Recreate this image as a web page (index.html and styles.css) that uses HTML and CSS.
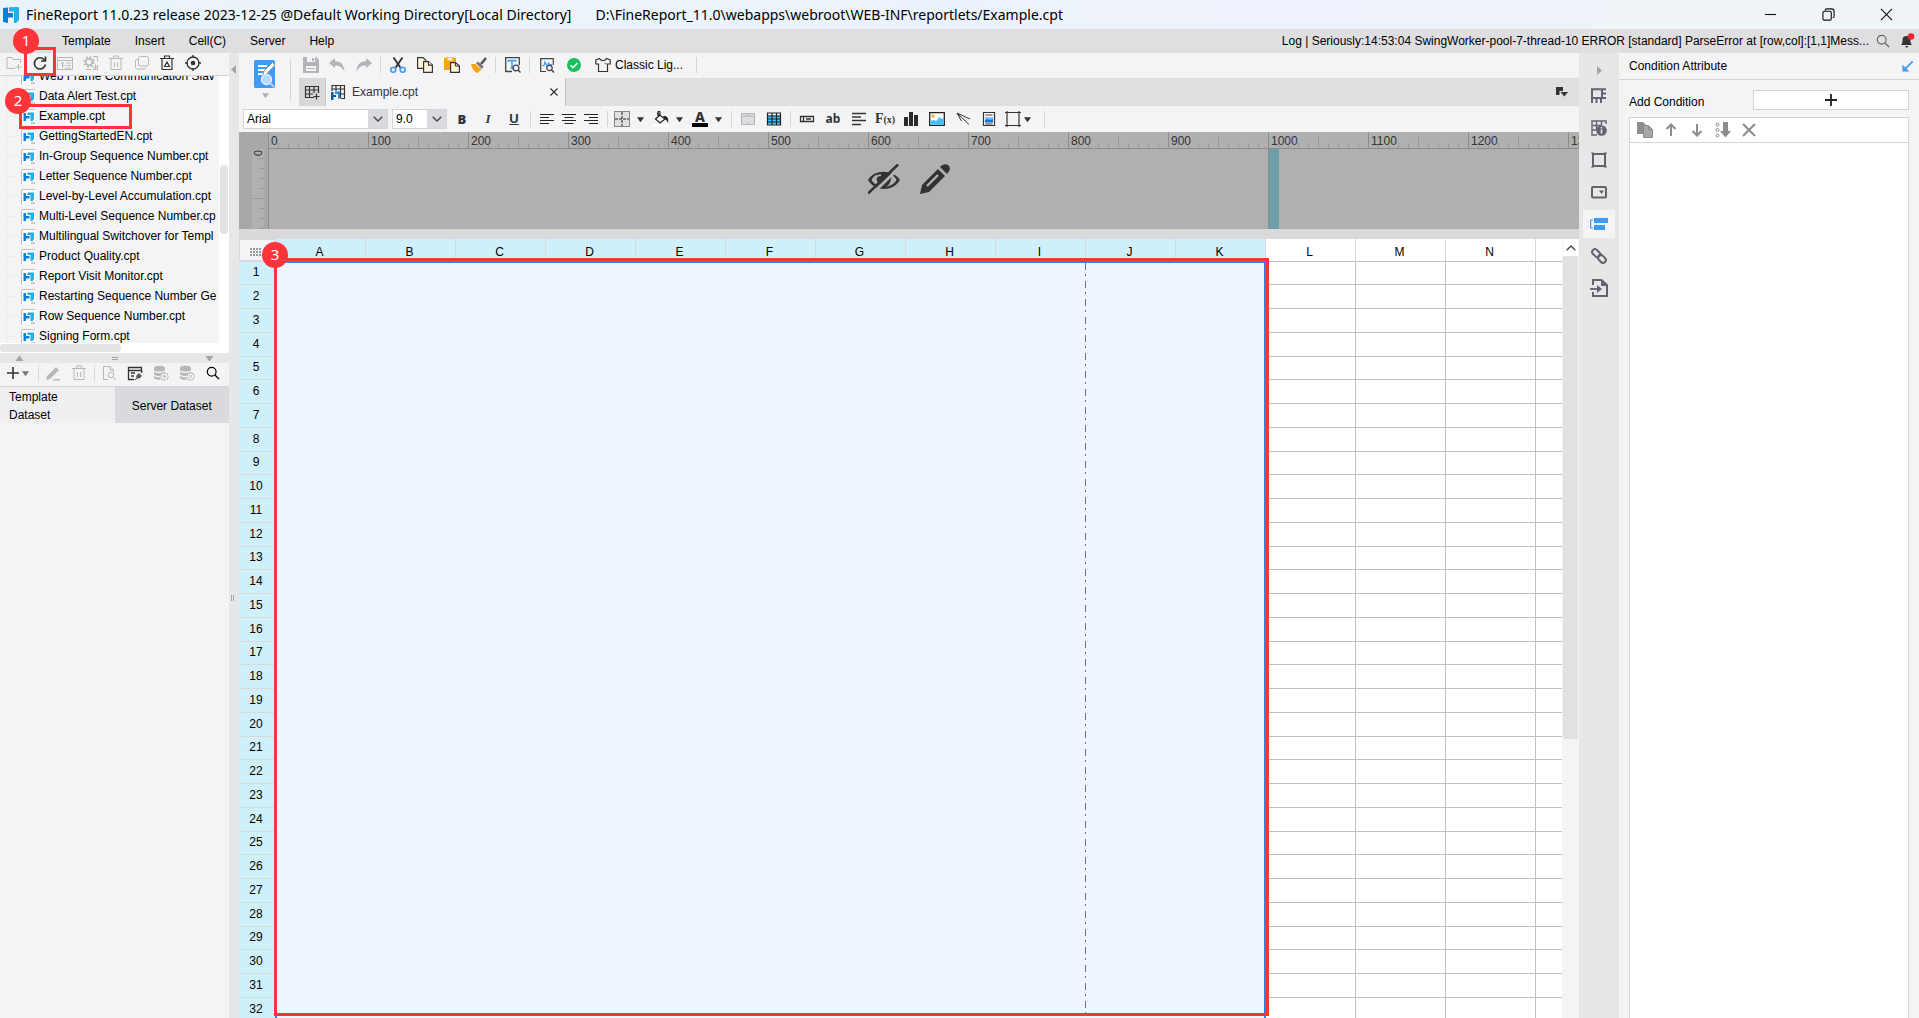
FILE: index.html
```html
<!DOCTYPE html>
<html lang="en">
<head>
    <meta charset="UTF-8">
    <meta name="viewport" content="width=device-width, initial-scale=1.0">
    <title>FineReport 11.0.23</title>
    <link rel="stylesheet" href="styles.css">
</head>
<body>
    <svg class="defs" aria-hidden="true">
        <symbol id="logo" viewBox="0 0 16 16">
            <path d="M0 1l5-.5V6h5v4.500H5V16l-5-1z" fill="#0a7fd4"/>
            <path d="M6 .300L14.500 0c1 0 1.500.5 1.500 1.500V13l-3 3h-2V4.500H6z" fill="#23b0e8"/>
        </symbol>
        <symbol id="cpt" viewBox="0 0 14 15">
            <path d="M0 0h14v15H0z" fill="#fff"/>
            <path d="M.5 15V.5H14" fill="none" stroke="#c4c4c4"/>
            <path d="M10 13h4v2h-4z" fill="#c8c8c8"/>
            <path d="M2.500 4H5v3h3.500v2.500H5V12H2.500z" fill="#0a7fdc"/>
            <path d="M6.500 3.500H13v6.500l-1.500 2H9.500V6h-3z" fill="#23b0e8"/>
        </symbol>
        <symbol id="caret" viewBox="0 0 8 5"><path d="M0 0h8L4.500 5h-1z"/></symbol>
        <symbol id="chevron" viewBox="0 0 10 6"><path d="M.7.700L5 5 9.300.700" fill="none" stroke="#444" stroke-width="1.300"/></symbol>
        <symbol id="trash" viewBox="0 0 16 16"><path d="M1 3.500h14M5.500 3V1h5v2M3 4v10.500h10V4M6.500 7v5M9.500 7v5" fill="none" stroke="currentColor"/></symbol>
        <symbol id="db" viewBox="0 0 16 16">
            <path d="M1 3c0-3 11-3 11 0v2c0 2-11 2-11 0zM1 6.500c2 2 9 2 11 0V8c-3 0-5 1.500-5 3-3 0-6-.5-6-2zM1 11c1.500 1 4 1.500 6 1.200 0 1 .5 2 1 2.500-3 .3-7-.2-7-1.700z" fill="currentColor"/>
            <circle cx="11.500" cy="11.500" r="3.700" fill="none" stroke="currentColor"/>
        </symbol>
        <symbol id="search" viewBox="0 0 16 16"><circle cx="6.500" cy="6.500" r="5" fill="none" stroke="currentColor" stroke-width="1.300"/><path d="M10.200 10.200L15 15" stroke="currentColor" stroke-width="1.600"/></symbol>
    </svg>

    <header class="title-bar">
        <svg class="app-logo"><use href="#logo"/></svg>
        <span class="app-title">FineReport 11.0.23 release 2023-12-25 @Default Working Directory[Local Directory]</span>
        <span class="app-path">D:\FineReport_11.0\webapps\webroot\WEB-INF\reportlets/Example.cpt</span>
        <div class="window-buttons">
            <button aria-label="Minimize"><svg viewBox="0 0 14 14"><path d="M1 7h12" stroke="#111" stroke-width="1.200"/></svg></button>
            <button aria-label="Restore"><svg viewBox="0 0 14 14"><g fill="none" stroke="#111" stroke-width="1.200"><rect x="1" y="3.500" width="9" height="9.500" rx="1.500"/><path d="M3.500 3V2.500C3.500 1.500 4 1 5 1h5.500C12 1 13 2 13 3.500V9c0 1-.5 1.500-1.500 1.500"/></g></svg></button>
            <button aria-label="Close"><svg viewBox="0 0 14 14"><path d="M1 1l12 12M13 1L1 13" stroke="#111" stroke-width="1.200"/></svg></button>
        </div>
    </header>

    <nav class="menu-bar">
        <div class="menus">
            <button>Template</button>
            <button>Insert</button>
            <button>Cell(C)</button>
            <button>Server</button>
            <button>Help</button>
        </div>
        <span class="log">Log | Seriously:14:53:04 SwingWorker-pool-7-thread-10 ERROR [standard] ParseError at [row,col]:[1,1]Mess...</span>
        <button class="menu-icon" aria-label="Search"><svg class="icon small grey"><use href="#search"/></svg></button>
        <button class="menu-icon" aria-label="Notifications"><svg class="icon" viewBox="0 0 16 16"><path d="M2 12c1.500-1.500 1.500-3 1.500-5 0-2.500 1.500-4 4-4s4 1.500 4 4c0 2 0 3.500 1.500 5zM6 13h3.500l-1.700 2z" fill="#333"/><circle cx="12" cy="3.500" r="3.300" fill="#f5222d"/></svg></button>
    </nav>

    <main class="workspace">
        <aside class="left-panel">
            <div class="tree-tools">
                <button aria-label="New folder"><svg class="icon off" viewBox="0 0 16 16"><path d="M9 13.500H1v-11h5l1 2h7.500V8M9.500 12H16M12.500 9v6" fill="none" stroke="currentColor"/></svg></button>
                <button aria-label="Refresh"><svg class="icon" viewBox="0 0 16 16"><path d="M12.500 5A5.600 5.600 0 1 0 13.500 9.500M13.500 1.500v4.500H9" fill="none" stroke="#333" stroke-width="1.700"/></svg></button>
                <button aria-label="Locate folder"><svg class="icon off" viewBox="0 0 16 16"><path d="M.5 2.500h15v12H.5zM.5 5.500h15M4 8h3M5.500 8v5M5.500 10.500H8M9 8h5M9 10.500h5M8 13h6" fill="none" stroke="currentColor"/></svg></button>
                <button aria-label="Settings"><svg class="icon off" viewBox="0 0 16 16"><path d="M10 1.500h4.500v5M14.500 10v4.500H10M8 14.500H3" fill="none" stroke="currentColor"/><circle cx="6" cy="7" r="3.200" fill="none" stroke="currentColor" stroke-width="1.500"/><circle cx="6" cy="7" r="4.800" fill="none" stroke="currentColor" stroke-width="1.800" stroke-dasharray="1.900 1.870"/><path d="M10 12h5M12.500 9.500v5" stroke="currentColor"/></svg></button>
                <button aria-label="Delete"><svg class="icon off"><use href="#trash"/></svg></button>
                <button aria-label="Copy"><svg class="icon off" viewBox="0 0 16 16"><g fill="none" stroke="currentColor"><rect x="4.500" y="1.500" width="10" height="9.500" rx="2"/><path d="M4 4.500H3c-1 0-1.500.5-1.500 1.500v6c0 1.500.5 2 2 2H10c1 0 1.500-.5 1.500-1.500"/></g></svg></button>
                <button aria-label="Recycle bin"><svg class="icon" viewBox="0 0 16 16"><path d="M1 3.500h14M5.500 3V1h5v2M3 4v10.500h10V4M5.500 11.500L8 7l2.500 4.500z" fill="none" stroke="#333" stroke-width="1.200"/></svg></button>
                <button aria-label="Locate"><svg class="icon" viewBox="0 0 16 16"><circle cx="8" cy="8" r="6" fill="none" stroke="#333" stroke-width="1.300"/><circle cx="8" cy="8" r="2.300" fill="#333"/><path d="M8 0v3M8 13v3M0 8h3M13 8h3" stroke="#333" stroke-width="1.300"/></svg></button>
            </div>

            <div class="tree-box">
                <ul class="tree">
                    <li><svg><use href="#cpt"/></svg>Web Frame Communication Slav</li>
                    <li><svg><use href="#cpt"/></svg>Data Alert Test.cpt</li>
                    <li><svg><use href="#cpt"/></svg>Example.cpt</li>
                    <li><svg><use href="#cpt"/></svg>GettingStartedEN.cpt</li>
                    <li><svg><use href="#cpt"/></svg>In-Group Sequence Number.cpt</li>
                    <li><svg><use href="#cpt"/></svg>Letter Sequence Number.cpt</li>
                    <li><svg><use href="#cpt"/></svg>Level-by-Level Accumulation.cpt</li>
                    <li><svg><use href="#cpt"/></svg>Multi-Level Sequence Number.cp</li>
                    <li><svg><use href="#cpt"/></svg>Multilingual Switchover for Templ</li>
                    <li><svg><use href="#cpt"/></svg>Product Quality.cpt</li>
                    <li><svg><use href="#cpt"/></svg>Report Visit Monitor.cpt</li>
                    <li><svg><use href="#cpt"/></svg>Restarting Sequence Number Ge</li>
                    <li><svg><use href="#cpt"/></svg>Row Sequence Number.cpt</li>
                    <li><svg><use href="#cpt"/></svg>Signing Form.cpt</li>
                </ul>
                <div class="tree-scroll-y"><div class="thumb"></div></div>
            </div>
            <div class="tree-scroll-x"><div class="thumb"></div></div>

            <div class="h-splitter">
                <svg class="caret up"><use href="#caret"/></svg>
                <span class="grip"></span>
                <svg class="caret"><use href="#caret"/></svg>
            </div>

            <div class="dataset-tools">
                <button class="add-dataset" aria-label="Add dataset"><svg class="icon" viewBox="0 0 16 16"><path d="M8 2v12M2 8h12" stroke="#333" stroke-width="1.600"/></svg><svg class="caret"><use href="#caret"/></svg></button>
                <span class="sep"></span>
                <button aria-label="Edit"><svg class="icon off" viewBox="0 0 16 16"><path d="M2 11L11 2l3 3-9 9-4 1zM9 14h6v1.500H7.500z" fill="currentColor"/></svg></button>
                <button aria-label="Delete dataset"><svg class="icon off"><use href="#trash"/></svg></button>
                <span class="sep"></span>
                <button aria-label="Preview"><svg class="icon off" viewBox="0 0 16 16"><path d="M7 14.500H2.500v-13H9l3.500 3.500v2M9 1.500V5h3.500" fill="none" stroke="currentColor"/><circle cx="10" cy="10" r="2.800" fill="none" stroke="currentColor"/><path d="M12 12l3 3" stroke="currentColor"/></svg></button>
                <button aria-label="Connection"><svg class="icon" viewBox="0 0 16 16"><path d="M7 14.500H1.500v-12h13V7M1.500 5.500h13M4 8h4M4 11h3" fill="none" stroke="#333" stroke-width="1.300"/><path d="M8 15l2-2M14 8l1.500-1.500" stroke="#333"/><path d="M9 11l3-3 3 3-2.500 2.500H10z" fill="#555"/></svg></button>
                <button aria-label="Run"><svg class="icon off" viewBox="0 0 16 16"><use href="#db"/><path d="M10.500 9.500v4l3-2z" fill="currentColor"/></svg></button>
                <button aria-label="Stop"><svg class="icon off" viewBox="0 0 16 16"><use href="#db"/><path d="M10 10l3 3M13 10l-3 3" stroke="currentColor"/></svg></button>
                <button aria-label="Find dataset"><svg class="icon small"><use href="#search"/></svg></button>
            </div>

            <div class="dataset-tabs">
                <button class="dataset-tab active">Template<br>Dataset</button>
                <button class="dataset-tab server">Server Dataset</button>
            </div>
        </aside>

        <div class="v-splitter">
            <svg class="v-arrow" viewBox="0 0 5 9"><path d="M5 0v9L0 4.500z"/></svg>
            <span class="v-grip"></span>
        </div>

        <section class="designer">
            <div class="top-tools">
                <button class="preview-button" aria-label="Preview template">
                    <svg class="preview-icon" viewBox="0 0 22 28"><rect y="0" width="21" height="28" rx="1.500" fill="#3f9bf8"/><path d="M4 6h9M4 10h7M4 14h5" stroke="#fff" stroke-width="1.800"/><path d="M9 15l1-4 8.500-8.500 2.500 2.500L12.500 14z" fill="#fff" stroke="#8a97a5"/><circle cx="12.500" cy="19.500" r="5" fill="#b5dbfb" stroke="#e8eef4" stroke-width="1.300"/><path d="M16.500 23.500l3.500 3.500" stroke="#c4cbd2" stroke-width="2"/></svg>
                    <svg class="caret"><use href="#caret"/></svg>
                </button>
                <div class="top-right">
                    <div class="main-tools">
                        <button aria-label="Save"><svg class="icon off" viewBox="0 0 16 16"><path d="M0 0h13l3 3v13H0z" fill="#b4b4b8"/><path d="M4 0h8v5H4zM3 9h10v5H3z" fill="#f4f4f7"/><path d="M9 1h2v3H9zM4 11h8v1H4z" fill="#b4b4b8"/></svg></button>
                        <button aria-label="Undo"><svg class="icon off" viewBox="0 0 16 16"><path d="M0 6l6-5v3.200c5.500 0 9 3 9.500 10.300C13 10.500 11 8.500 6 8.500V11z" fill="#b4b4b8"/></svg></button>
                        <button aria-label="Redo"><svg class="icon off" viewBox="0 0 16 16"><path d="M16 6l-6-5v3.200C4.500 4.200 1 7.200.500 14.500 3 10.500 5 8.500 10 8.500V11z" fill="#b4b4b8"/></svg></button>
                        <span class="sep"></span>
                        <button aria-label="Cut"><svg class="icon" viewBox="0 0 16 16"><path d="M3.500.500l7.500 11M12.500.500L5 11.500" stroke="#333" stroke-width="1.900"/><circle cx="3.300" cy="12.700" r="2.500" fill="none" stroke="#3f9bf8" stroke-width="1.600"/><circle cx="12.700" cy="12.700" r="2.500" fill="none" stroke="#3f9bf8" stroke-width="1.600"/></svg></button>
                        <button aria-label="Copy cell"><svg class="icon" viewBox="0 0 16 16"><g fill="#fff6dd" stroke="#333" stroke-width="1.200"><path d="M.6.600H6L9 3.500v7.900H.600z"/><path d="M6.600 4.600h5l3.800 3.500v7.300H6.600z"/><path d="M11.500 4.600v3.500h4"/></g></svg></button>
                        <button aria-label="Paste"><svg class="icon" viewBox="0 0 16 16"><path d="M0 1h12v12H0z" fill="#f2a50f"/><path d="M3 0h6v4H3z" fill="#fff1cf" stroke="#f2a50f"/><path d="M6.600 5.600h5l3.800 3.500v6.300H6.600z" fill="#fff6dd" stroke="#333" stroke-width="1.200"/><path d="M11.500 5.600v3.500h4" fill="none" stroke="#333"/></svg></button>
                        <button aria-label="Format painter"><svg class="icon" viewBox="0 0 16 16"><path d="M15 1l-5 6" stroke="#555" stroke-width="2.600"/><path d="M7 4.500l5.500 5L11 12 5 6.200z" fill="#777"/><path d="M0 7l4.500 0 6 5.500-4 3.500C4 15.500 1 12 0 7z" fill="#f2a50f"/></svg></button>
                        <span class="sep"></span>
                        <button aria-label="Find text"><svg class="icon" viewBox="0 0 16 16"><path d="M7 14.500H.700V.700h13.600V8" fill="none" stroke="#444" stroke-width="1.300"/><path d="M3.500 5V3.500h7V5M7 3.500V11M5.500 11h3" fill="none" stroke="#3f9bf8" stroke-width="1.500"/><circle cx="11" cy="11" r="2.900" fill="#eef" stroke="#444" stroke-width="1.300"/><path d="M13 13l2.500 2.500" stroke="#444" stroke-width="1.400"/></svg></button>
                        <span class="sep"></span>
                        <button aria-label="Performance"><svg class="icon" viewBox="0 0 16 16"><path d="M7 14.500H1.700V1.700h12.600V8" fill="none" stroke="#444" stroke-width="1.200"/><path d="M3 8.500h2L6 5l2 4.500L9.500 6l1 1.500H13" fill="none" stroke="#3f9bf8" stroke-width="1.200"/><circle cx="10.500" cy="11" r="2.700" fill="#eef" stroke="#444" stroke-width="1.200"/><path d="M12.500 13l2.500 2.500" stroke="#444" stroke-width="1.400"/></svg></button>
                        <button aria-label="Check"><svg class="icon" viewBox="0 0 16 16"><circle cx="8" cy="8" r="7" fill="#1bbf5c"/><path d="M4.500 8.200l2.500 2.500 4.500-4.700" fill="none" stroke="#fff" stroke-width="1.600"/></svg></button>
                        <button class="theme-button"><svg class="icon" viewBox="0 0 16 16"><path d="M4.500 1.500L.800 3v4H3.500v7.500h9V7h2.700V3l-3.700-1.500C10.500 4.200 5.500 4.200 4.500 1.500z" fill="none" stroke="#333" stroke-width="1.200"/><path d="M9.500 6.500h2" stroke="#3f9bf8" stroke-width="1.500"/></svg>Classic Lig...</button>
                        <span class="sep"></span>
                    </div>
                    <div class="tab-strip">
                        <button class="new-tab" aria-label="New template"><svg class="icon" viewBox="0 0 16 16"><path d="M10 13.500H1.500v-11h13V9M1.500 6h13M5.500 2.500v11M10 2.500V9M1.500 10H9M9.500 12.500h6M12.500 9.500v6" fill="none" stroke="#333" stroke-width="1.200"/></svg></button>
                        <div class="file-tab">
                            <svg class="icon" viewBox="0 0 16 16"><path d="M2 7V1.500h12.500V14.500H11M2 5h12.500M6 1.500V7M10.500 1.500v13M10 10h4.500" fill="none" stroke="#333" stroke-width="1.200"/><path d="M1 8h2.500v3H6v2H3.500v3H1z" fill="#0a5fa8"/><path d="M5 7.500h5v6L8 15.500V10H5z" fill="#1b93d8"/></svg>
                            <span>Example.cpt</span>
                            <button class="close-tab" aria-label="Close tab"><svg viewBox="0 0 8 8"><path d="M.5.500l7 7M7.500.500l-7 7" stroke="#333" stroke-width="1.200"/></svg></button>
                        </div>
                        <button class="tab-list" aria-label="Tab list"><svg viewBox="0 0 12 10"><path d="M0 0h7v4H3.500v4H0z" fill="#333"/><path d="M4.500 5H12L8.300 9.500z" fill="#333"/></svg></button>
                    </div>
                </div>
            </div>

            <div class="format-bar">
                <label class="combo font"><select aria-label="Font"><option>Arial</option></select><span><svg><use href="#chevron"/></svg></span></label>
                <label class="combo size"><select aria-label="Font size"><option>9.0</option></select><span><svg><use href="#chevron"/></svg></span></label>
                <button class="glyph bold">B</button>
                <button class="glyph italic">I</button>
                <button class="glyph underline">U</button>
                <span class="sep"></span>
                <div class="aligns">
                    <button aria-label="Align left"><svg class="icon" viewBox="0 0 16 16"><path d="M1 3.500h14M1 6.500h9M1 9.500h14M1 12.500h9" stroke="#222" stroke-width="1.200"/></svg></button>
                    <button aria-label="Align center"><svg class="icon" viewBox="0 0 16 16"><path d="M1 3.500h14M3.500 6.500h9M1 9.500h14M3.500 12.500h9" stroke="#222" stroke-width="1.200"/></svg></button>
                    <button aria-label="Align right"><svg class="icon" viewBox="0 0 16 16"><path d="M1 3.500h14M6 6.500h9M1 9.500h14M6 12.500h9" stroke="#222" stroke-width="1.200"/></svg></button>
                </div>
                <span class="sep"></span>
                <button class="drop" aria-label="Borders"><svg class="icon" viewBox="0 0 16 16"><path d="M.5.500h15v15H.500z" fill="#e0e0e3" stroke="#222" stroke-dasharray="1 1"/><path d="M1 8h14M8 1v14" stroke="#222" stroke-dasharray="3 1"/></svg><svg class="caret"><use href="#caret"/></svg></button>
                <button class="drop" aria-label="Fill color"><svg class="icon" viewBox="0 0 16 16"><path d="M0 13h16v3H0z" fill="#fff"/><path d="M4 2l8 6-5 4-4.500-4L7.500 3.500M5 5V1.500C5 0 7 0 7 1.500V4" fill="none" stroke="#222" stroke-width="1.200"/><path d="M10 5c4-.5 6 2 5 7-1-2.500-2-3.500-3.500-4z" fill="#222"/></svg><svg class="caret"><use href="#caret"/></svg></button>
                <button class="drop" aria-label="Font color"><span class="font-color">A</span><svg class="caret"><use href="#caret"/></svg></button>
                <span class="sep"></span>
                <button aria-label="Merge"><svg class="icon off" viewBox="0 0 16 16"><path d="M1.500 2.500h13v11h-13zM1.500 5h13M8 2.500V5M8 11v2.500" fill="#dcdcdf" stroke="#b4b4b8"/></svg></button>
                <button aria-label="Cells"><svg class="icon" viewBox="0 0 16 16"><path d="M1.500 4.500h13v9h-13z" fill="#41c1ff"/><path d="M1.500 2h13v12h-13zM1.500 5h13M1.500 8h13M1.500 11h13M6 2v12M10.500 2v12" fill="none" stroke="#222" stroke-width="1.200"/></svg></button>
                <span class="sep"></span>
                <button aria-label="Widget"><svg class="icon" viewBox="0 0 16 16"><path d="M1.500 5.500h13v5h-13zM4.500 5v5M7 8h5" fill="none" stroke="#333" stroke-width="1.300"/></svg></button>
                <button class="glyph ab">ab</button>
                <button aria-label="Rich text"><svg class="icon" viewBox="0 0 16 16"><path d="M1 2.500h14M1 6h9M1 9.500h14M1 13.500h9" stroke="#333" stroke-width="1.600"/></svg></button>
                <button class="glyph fx">F<small>(x)</small></button>
                <button aria-label="Chart"><svg class="icon" viewBox="0 0 16 16"><path d="M1 6h4v9H1zM6 1h4v14H6zM11 4h4v11h-4z" fill="#2b2b2e"/></svg></button>
                <button aria-label="Picture"><svg class="icon" viewBox="0 0 16 16"><path d="M.7 1.700h14.600v12.600H.700z" fill="#fff" stroke="#222" stroke-width="1.300"/><path d="M1.300 13.700V10l3-1 3 1 3-4 2 2 2.400-1v6.700z" fill="#41bff8"/><circle cx="4" cy="5" r="1.700" fill="#ffb733"/></svg></button>
                <button aria-label="Slope line"><svg class="icon" viewBox="0 0 16 16"><path d="M2 2l13 6M2 2l12 11.500M2 2l4.500 8" stroke="#333"/></svg></button>
                <button aria-label="Sub report"><svg class="icon" viewBox="0 0 16 16"><path d="M2.500 1.500h11v13h-11z" fill="#fff" stroke="#333" stroke-width="1.200"/><path d="M4.500 4h7M4.500 13h7" stroke="#333"/><path d="M4 6h8v5.500H4z" fill="#7cc4ff"/><path d="M4 11.500V9l3-1 2 1 3-1v3.500z" fill="#1873d8"/></svg></button>
                <button class="drop frame" aria-label="Float element"><svg class="icon" viewBox="0 0 16 16"><path d="M2 0v16M14 0v16M0 1.500h16M0 14.500h16" stroke="#333" stroke-width="1.200"/></svg><svg class="caret"><use href="#caret"/></svg></button>
                <span class="sep"></span>
            </div>

            <div class="param-pane">
                <div class="ruler-row">
                    <div class="ruler-corner"></div>
                    <div class="ruler" id="ruler"></div>
                </div>
                <div class="param-body">
                    <div class="ruler-left"><div class="ruler-y">0</div></div>
                    <div class="param-canvas">
                        <button aria-label="Hide parameter pane"><svg viewBox="0 0 32 30"><path d="M0 16C6 5 25 5 32 16 25 28 7 28 0 16z" fill="#333"/><path d="M3.500 16c1-2.500 3-4.500 5.500-5.500-1 5 0 9.500 5 12C9 22 5 19 3.500 16zM28.500 16c-1-2.500-3-4.500-5.500-5.500 1 5-1 10.500-5 12 5-.5 9-3.500 10.500-6.500z" fill="#b0b0b0"/><path d="M8 14c1-2 3-3 5-3" stroke="#b0b0b0" stroke-width="1.500" fill="none"/><path d="M3 31L32 3" stroke="#b0b0b0" stroke-width="3"/><path d="M0 29.500L30 .500" stroke="#333" stroke-width="2.600"/></svg></button>
                        <button aria-label="Edit parameter pane"><svg viewBox="0 0 30 30"><path d="M0 30l2-9L18 5l7 7L9 28z" fill="#333"/><path d="M7 22L18 11" stroke="#b0b0b0" stroke-width="2.400"/><path d="M20 3c3-4 7-3 8.500-1.500S31 6 27 10z" fill="#333"/></svg></button>
                    </div>
                    <div class="param-edge"></div>
                </div>
            </div>

            <div class="sheet-pane">
                <div class="sheet-view">
                    <table class="sheet" id="sheet"></table>
                    <div class="selection"></div>
                    <div class="page-line"></div>
                    <div class="mark-box box-3"></div>
                    <span class="mark mark-3">3</span>
                </div>
                <div class="sheet-scroll">
                    <button aria-label="Scroll up"><svg class="flip"><use href="#chevron"/></svg></button>
                    <div class="thumb"></div>
                </div>
            </div>
        </section>

        <nav class="side-strip">
            <span class="strip-arrow"><svg viewBox="0 0 5 9"><path d="M0 0v9l5-4.500z"/></svg></span>
            <button aria-label="Cell element"><svg class="icon" viewBox="0 0 16 16"><path d="M1 15V1.200h14M2 10h13M11 1v9M11 5.500h4M5.500 11v4M10 11v4" fill="none" stroke="currentColor" stroke-width="2"/></svg></button>
            <button aria-label="Cell attribute"><svg class="icon" viewBox="0 0 16 16"><path d="M6 15H1V1h14v3M1 5.500h9M1 10h4M5.500 1v9M10.500 1v4" fill="none" stroke="currentColor" stroke-width="1.400"/><circle cx="10.500" cy="10.500" r="5.300" fill="currentColor"/><path d="M10.500 7v1.500M10.500 9.500v4" stroke="#e7e7e7" stroke-width="1.600"/></svg></button>
            <button aria-label="Float element attribute"><svg class="icon" viewBox="0 0 16 16"><path d="M2 2h12v12H2z" fill="none" stroke="currentColor" stroke-width="2"/><path d="M0 1h3M13 1h3M0 15h3M13 15h3" stroke="currentColor"/></svg></button>
            <button aria-label="Widget settings"><svg class="icon" viewBox="0 0 16 16"><rect x="1" y="3" width="14" height="10.500" rx="1" fill="none" stroke="currentColor" stroke-width="2"/><path d="M8 6.500h5L10.500 10z" fill="currentColor"/></svg></button>
            <button class="current" aria-label="Condition attribute"><svg class="icon wide" viewBox="0 0 18 14"><path d="M3 3H.600v8H3" fill="none" stroke="#3f9bf8" stroke-width="1.200"/><path d="M4 1h14v5H4zM4 8h11v5H4z" fill="#3f9bf8"/></svg></button>
            <button aria-label="Hyperlink"><svg class="icon" viewBox="0 0 16 16"><g fill="none" stroke="currentColor" stroke-width="2"><rect x="-4.500" y="-2.800" width="9" height="5.600" rx="2.800" transform="translate(5.200 5.200) rotate(45)"/><rect x="-4.500" y="-2.800" width="9" height="5.600" rx="2.800" transform="translate(10.800 10.800) rotate(45)"/></g></svg></button>
            <button aria-label="Version"><svg class="icon wide" viewBox="0 0 18 18"><path d="M3 6V1h8.500L17 6v11H3v-4" fill="none" stroke="currentColor" stroke-width="2"/><path d="M11 1v6h6z" fill="currentColor"/><path d="M0 10h8" stroke="currentColor" stroke-width="1.800"/><path d="M7 6l5 4-5 4z" fill="currentColor"/></svg></button>
        </nav>

        <aside class="right-panel">
            <div class="panel-head">
                <h2>Condition Attribute</h2>
                <button aria-label="Detach"><svg viewBox="0 0 12 12"><path d="M11.500.500L4 8" stroke="#3f9bf8" stroke-width="2"/><path d="M.5 4v7.500H8z" fill="#3f9bf8"/></svg></button>
            </div>
            <div class="add-row">
                <span>Add Condition</span>
                <button aria-label="Add condition"><svg viewBox="0 0 12 12"><path d="M6 0v12M0 6h12" stroke="#222" stroke-width="1.800"/></svg></button>
            </div>
            <div class="condition-box">
                <div class="condition-tools">
                    <button aria-label="Copy condition"><svg class="icon" viewBox="0 0 16 16"><path d="M0 0h6l3 3v9H0z" fill="#8c8c8c"/><path d="M6.500 3.500h5l4 4v8h-9z" fill="#a6a6a6" stroke="#8c8c8c"/><path d="M11.500 4v3.500H15" fill="none" stroke="#8c8c8c"/></svg></button>
                    <button aria-label="Move up"><svg class="icon" viewBox="0 0 16 16"><path d="M8 14V3M3.500 7L8 2.500 12.500 7" fill="none" stroke="#8c8c8c" stroke-width="2"/></svg></button>
                    <button aria-label="Move down"><svg class="icon" viewBox="0 0 16 16"><path d="M8 2v11M3.500 9L8 13.500 12.500 9" fill="none" stroke="#8c8c8c" stroke-width="2"/></svg></button>
                    <button aria-label="Move to bottom"><svg class="icon" viewBox="0 0 16 16"><g fill="none" stroke="#8c8c8c"><circle cx="2.500" cy="2.500" r="1.500"/><circle cx="2.500" cy="8" r="1.500"/><circle cx="2.500" cy="13.500" r="1.500"/></g><path d="M8 0h5v9h3l-5.500 6.500L5 9h3z" fill="#8c8c8c"/></svg></button>
                    <button aria-label="Remove"><svg class="icon" viewBox="0 0 16 16"><path d="M2 2l12 12M14 2L2 14" stroke="#8c8c8c" stroke-width="2"/></svg></button>
                </div>
            </div>
        </aside>
    </main>

    <div class="mark-box box-1"></div>
    <span class="mark mark-1">1</span>
    <div class="mark-box box-2"></div>
    <span class="mark mark-2">2</span>

    <script>
        const columns = 'ABCDEFGHIJKLMNO'.split('');
        const lastSelected = 10; // column K
        const rowCount = 32;

        function buildRuler() {
            const ruler = document.getElementById('ruler');
            for (let i = 0; i <= 13; i++) {
                const unit = document.createElement('span');
                unit.className = 'ruler-unit';
                unit.textContent = i * 100;
                ruler.appendChild(unit);
            }
        }

        function buildSheet() {
            let html = '<thead><tr><th class="corner"><span></span></th>';
            columns.forEach((name, i) => {
                html += `<th class="${i <= lastSelected ? 'picked' : ''}">${name === 'O' ? '' : name}</th>`;
            });
            html += '</tr></thead><tbody>';
            for (let row = 1; row <= rowCount; row++) {
                html += `<tr><th class="picked">${row}</th>`;
                columns.forEach((name, i) => {
                    html += `<td class="${i <= lastSelected ? 'picked' : ''}"></td>`;
                });
                html += '</tr>';
            }
            document.getElementById('sheet').innerHTML = html + '</tbody>';
        }

        buildRuler();
        buildSheet();
    </script>
</body>
</html>
```
FILE: styles.css
```css
* {
    box-sizing: border-box;
}
body {
    display: flex;
    flex-direction: column;
    position: relative;
    height: 100vh;
    margin: 0;
    overflow: hidden;
    background: #f4f4f7;
    color: #000;
    font-family: "Liberation Sans", Arial, sans-serif;
    font-size: 12px;
    line-height: 16px;
}
button {
    display: flex;
    align-items: center;
    justify-content: center;
    flex: none;
    margin: 0;
    padding: 0;
    border: 0;
    background: none;
    color: inherit;
    font: inherit;
}
svg {
    display: block;
    flex: none;
}
.defs {
    position: absolute;
    width: 0;
    height: 0;
}
.icon {
    width: 16px;
    height: 16px;
}
.icon.small {
    width: 14px;
    height: 14px;
}
.icon.wide {
    width: 18px;
}
.off {
    color: #b8b8bb;
}
.grey {
    color: #666;
}
.caret {
    width: 7px;
    height: 5px;
    fill: #333;
}
.sep {
    flex: none;
    width: 7px;
    height: 16px;
    background: linear-gradient(#d5d5d8, #d5d5d8) center / 1px 100% no-repeat;
}

/* title bar */
.title-bar {
    display: flex;
    align-items: center;
    flex: none;
    height: 29px;
    padding-left: 3px;
    background: linear-gradient(90deg, #e9f4fa, #eef2fc 70%, #eef4f8 85%);
    font-family: "Noto Sans", "Open Sans", sans-serif;
    font-size: 14px;
}
.app-logo {
    width: 16px;
    height: 16px;
    margin-right: 7px;
}
.app-path {
    margin-left: 24px;
}
.window-buttons {
    display: flex;
    margin-left: auto;
    margin-right: 4px;
}
.window-buttons button {
    width: 58px;
    height: 29px;
}
.window-buttons svg {
    width: 13px;
    height: 13px;
}

/* menu bar */
.menu-bar {
    display: flex;
    align-items: center;
    flex: none;
    height: 24px;
    background: #dfdfe1;
}
.menus {
    display: flex;
    gap: 24px;
    margin-left: 62px;
}
.log {
    margin-left: auto;
    margin-right: 2px;
}
.menu-icon {
    width: 24px;
}

.workspace {
    display: flex;
    flex: 1;
    min-height: 0;
}

/* template tree */
.left-panel {
    flex: none;
    width: 229px;
}
.tree-tools {
    display: flex;
    align-items: center;
    justify-content: space-between;
    height: 23px;
    padding: 0 28px 2px 6px;
    border-bottom: 1px solid #d5d5d8;
}
.tree-box {
    display: flex;
    height: 267px;
}
.tree {
    flex: 1;
    margin: -10px 0 0 6px;
    padding: 0;
    border-left: 1px solid #ececef;
    overflow: hidden;
    list-style: none;
    white-space: nowrap;
    clip-path: inset(10px 0 0 0);
}
.tree li {
    display: flex;
    align-items: center;
    gap: 4px;
    height: 20px;
    padding-left: 14px;
    background: linear-gradient(#ececef, #ececef) 0 10px / 9px 1px no-repeat;
}
.tree svg {
    width: 14px;
    height: 15px;
}
.tree-scroll-y {
    width: 10px;
    padding-top: 89px;
    background: #fff;
}
.tree-scroll-y .thumb {
    width: 8px;
    height: 69px;
    margin-left: 1px;
    border-radius: 3px;
    background: #e4e4e6;
}
.tree-scroll-x {
    height: 10px;
    padding-top: 1px;
    background: #fff;
}
.tree-scroll-x .thumb {
    width: 121px;
    height: 8px;
    border-radius: 3px;
    background: #e4e4e6;
}
.h-splitter {
    display: flex;
    align-items: center;
    justify-content: space-between;
    height: 10px;
    padding: 0 15px;
    background: #e7e7e7;
}
.h-splitter .caret {
    width: 9px;
    fill: #a4a4a6;
}
.up {
    transform: rotate(180deg);
}
.grip {
    width: 6px;
    height: 3px;
    border-top: 1px solid #a4a4a6;
    border-bottom: 1px solid #a4a4a6;
}
.dataset-tools {
    display: flex;
    align-items: center;
    height: 23px;
    padding: 0 0 3px 5px;
}
.dataset-tools button {
    width: 26px;
}
.dataset-tools .add-dataset {
    gap: 1px;
    width: 31px;
    justify-content: flex-start;
}
.dataset-tools .sep {
    width: 4px;
}
.dataset-tools .caret {
    fill: #777;
}
.dataset-tabs {
    display: flex;
    height: 37px;
    border-top: 1px solid #d5d5d8;
}
.dataset-tab {
    width: 50%;
    justify-content: flex-start;
    padding: 2px 0 0 9px;
    background: #efeff1;
    line-height: 18px;
    text-align: left;
}
.dataset-tab.server {
    justify-content: center;
    padding-left: 0;
    background: #d9dadd;
}

.v-splitter {
    display: flex;
    flex-direction: column;
    flex: none;
    width: 10px;
    padding: 12px 0 0 2px;
    background: #e7e7e7;
}
.v-arrow {
    width: 5px;
    height: 9px;
    fill: #a4a4a6;
}
.v-grip {
    width: 3px;
    height: 6px;
    margin: auto 0 41vh;
    border-left: 1px solid #a4a4a6;
    border-right: 1px solid #a4a4a6;
}

/* designer toolbars */
.designer {
    display: flex;
    flex-direction: column;
    flex: 1;
    min-width: 0;
}
.top-tools {
    display: flex;
    flex: none;
    height: 53px;
}
.preview-button {
    flex-direction: column;
    justify-content: flex-start;
    gap: 5px;
    width: 60px;
    padding: 7px 8px 0 0;
    background: linear-gradient(#d5d5d8, #d5d5d8) 51px 6px / 1px 42px no-repeat;
}
.preview-button .caret {
    fill: #b0b0b2;
}
.preview-icon {
    width: 22px;
    height: 28px;
}
.top-right {
    flex: 1;
    min-width: 0;
}
.main-tools {
    display: flex;
    align-items: center;
    height: 25px;
    padding-bottom: 2px;
}
.main-tools button {
    width: 27px;
}
.main-tools button:first-child {
    width: 24px;
}
.main-tools .theme-button {
    gap: 4px;
    width: 106px;
    padding-left: 8px;
    justify-content: flex-start;
}
.tab-strip {
    display: flex;
    height: 28px;
    background: #dfdfe1;
}
.new-tab {
    width: 27px;
    border-right: 1px solid #c4c4c7;
    background: #d8d8db;
}
.file-tab {
    display: flex;
    align-items: center;
    gap: 6px;
    width: 240px;
    padding: 0 7px 0 4px;
    border-right: 1px solid #c4c4c7;
    background: #f4f4f7;
    color: #333;
}
.close-tab {
    margin-left: auto;
}
.close-tab svg {
    width: 8px;
    height: 8px;
}
.tab-list {
    margin-left: auto;
    margin-right: 11px;
}
.tab-list svg {
    width: 12px;
    height: 10px;
}
.format-bar {
    display: flex;
    align-items: center;
    flex: none;
    height: 26px;
    padding-left: 4px;
}
.format-bar button {
    width: 26px;
}
.combo {
    display: flex;
    height: 20px;
    border: 1px solid #d5d5d8;
}
.combo select {
    flex: 1;
    min-width: 0;
    padding: 0 3px;
    border: 0;
    border-radius: 0;
    appearance: none;
    background: #fff;
    color: #000;
    font: inherit;
}
.combo span {
    display: flex;
    align-items: center;
    justify-content: center;
    width: 19px;
    background: #d9dadd;
}
.combo svg {
    width: 10px;
    height: 6px;
}
.font {
    width: 145px;
    margin-right: 4px;
}
.size {
    width: 55px;
    margin-right: 2px;
}
.glyph {
    color: #333;
    font-size: 13px;
}
.bold {
    font-family: "Noto Sans", sans-serif;
    font-weight: 900;
}
.italic {
    font-family: "Liberation Serif", serif;
    font-style: italic;
    font-weight: bold;
}
.underline {
    font-weight: bold;
    text-decoration: underline;
}
.ab {
    font-family: "Noto Sans", sans-serif;
    font-size: 12px;
    font-weight: bold;
}
.fx {
    align-items: baseline;
    font-family: "Liberation Serif", serif;
    font-size: 14px;
    font-weight: bold;
}
.fx small {
    font-size: 10px;
}
.aligns {
    display: flex;
    padding: 0 2px;
}
.format-bar .aligns button {
    width: 22px;
}
.format-bar .drop {
    justify-content: flex-start;
    gap: 7px;
    width: 39px;
    padding-left: 3px;
}
.format-bar .frame {
    gap: 3px;
}
.font-color {
    width: 16px;
    height: 16px;
    border-bottom: 4px solid #000;
    color: #333;
    font-family: "Noto Sans", sans-serif;
    font-size: 14px;
    font-weight: 800;
    line-height: 11px;
}

/* parameter pane with rulers */
.param-pane {
    display: flex;
    flex-direction: column;
    flex: none;
    height: 97px;
    background: #b0b0b0;
    color: #333;
}
.ruler-row {
    display: flex;
    height: 17px;
    overflow: hidden;
}
.ruler-corner {
    flex: none;
    width: 29px;
    background: #a8a8a8;
}
.ruler {
    display: flex;
    flex: 1;
    min-width: 0;
    overflow: hidden;
    border-bottom: 1px solid #8c8c8c;
}
.ruler-unit {
    flex: none;
    width: 100px;
    padding: 1px 0 0 3px;
    background:
        linear-gradient(#8c8c8c, #8c8c8c) 0 0 / 1px 100% no-repeat,
        linear-gradient(#989898, #989898) 50px 100% / 1px 11px no-repeat,
        repeating-linear-gradient(90deg, #989898 0 1px, transparent 1px 10px) 0 100% / 100% 5px no-repeat;
}
.param-body {
    display: flex;
    flex: 1;
    min-height: 0;
}
.ruler-left {
    flex: none;
    width: 30px;
    padding-left: 13px;
    border-right: 1px solid #8c8c8c;
    background: #a8a8a8;
}
.ruler-y {
    height: 100%;
    padding-top: 1px;
    background:
        linear-gradient(#989898, #989898) 100% 49px / 11px 1px no-repeat,
        repeating-linear-gradient(transparent 0 9px, #989898 9px 10px) 100% 0 / 5px 100% no-repeat,
        #b0b0b0;
    font-size: 11px;
    line-height: 12px;
    writing-mode: vertical-rl;
}
.param-canvas {
    display: flex;
    align-items: flex-start;
    justify-content: center;
    gap: 19px;
    width: 1000px;
    padding: 15px 0 0 281px;
    border-right: 1px solid #8c8c8c;
}
.param-canvas svg {
    width: 32px;
    height: 30px;
}
.param-edge {
    width: 10px;
    background: #6f9eab;
}

/* sheet */
.sheet-pane {
    display: flex;
    flex: 1;
    min-height: 0;
    border-top: 10px solid #d9d9dc;
}
.sheet-view {
    flex: 1;
    position: relative;
    min-width: 0;
    background: #fff;
}
.sheet-view .sheet {
    display: block;
    height: 100%;
    overflow: hidden;
}
.sheet {
    border-spacing: 0;
}
.sheet th,
.sheet td {
    min-width: 90px;
    height: 24px;
    padding: 0 2px 2px 0;
    border: 0 solid #bfbfbf;
    border-width: 1px 0 0 1px;
    font-weight: normal;
    line-height: 16px;
}
.sheet tbody tr:nth-child(4n+1) > * {
    height: 23px;
}
.sheet tbody th {
    min-width: 36px;
    border-left: 0;
    border-color: #d9d9dc;
}
.sheet thead tr > th {
    height: 22px;
    padding-top: 5px;
    border-top: 0;
    border-color: #d9d9dc;
    line-height: 14px;
}
.sheet thead .corner {
    min-width: 36px;
    border: 1px solid #d9d9dc;
    background: #f4f4f7;
}
.corner span {
    display: block;
    width: 11px;
    height: 8px;
    margin-left: 10px;
    background: repeating-linear-gradient(90deg, transparent 0 2px, #f4f4f7 2px 3px), repeating-linear-gradient(#999 0 2px, #f4f4f7 2px 3px);
}
.sheet th.picked {
    background: #cff0fb;
}
.sheet td.picked {
    border-color: #edf5fe;
    background: #edf5fe;
}
.selection {
    position: absolute;
    top: 22px;
    left: 36px;
    bottom: 0;
    width: 991px;
    border: solid #2f80f5;
    border-width: 2px 2px 0;
}
.page-line {
    position: absolute;
    top: 24px;
    left: 846px;
    bottom: 0;
    width: 1px;
    background: repeating-linear-gradient(#6b7280 0 7px, transparent 7px 11px, #6b7280 11px 13px, transparent 13px 18px);
}
.sheet-scroll {
    display: flex;
    flex-direction: column;
    flex: none;
    width: 17px;
    padding: 0 1px;
}
.sheet-scroll button {
    height: 17px;
    background: #fff;
}
.sheet-scroll svg {
    width: 10px;
    height: 6px;
}
.sheet-scroll .thumb {
    height: 62%;
    background: #e1e1e1;
}
.flip {
    transform: rotate(180deg);
}

/* right side */
.side-strip {
    display: flex;
    flex-direction: column;
    align-items: center;
    gap: 4px;
    flex: none;
    width: 40px;
    background: #e7e7e7;
    color: #5f6470;
}
.strip-arrow {
    display: flex;
    align-items: center;
    height: 25px;
    padding-top: 9px;
}
.strip-arrow svg {
    width: 5px;
    height: 9px;
    fill: #a4a4a6;
}
.side-strip button {
    width: 32px;
    height: 28px;
}
.side-strip .wide {
    height: 18px;
}
.side-strip .current {
    background: #f4f4f7;
}
.right-panel {
    display: flex;
    flex-direction: column;
    flex: none;
    width: 300px;
}
.panel-head {
    display: flex;
    align-items: center;
    justify-content: space-between;
    height: 27px;
    padding: 0 6px 0 10px;
    border-bottom: 1px solid #d5d5d8;
}
.panel-head h2 {
    margin: 0;
    font-size: 12px;
    font-weight: normal;
}
.panel-head svg {
    width: 11px;
    height: 11px;
}
.add-row {
    display: flex;
    align-items: center;
    justify-content: space-between;
    margin: 10px 10px 7px;
}
.add-row span {
    padding-top: 3px;
}
.add-row button {
    width: 156px;
    height: 20px;
    border: 1px solid #d5d5d8;
    background: #fff;
}
.add-row svg {
    width: 12px;
    height: 12px;
}
.condition-box {
    flex: 1;
    margin: 0 10px;
    border: 1px solid #d5d5d8;
    border-bottom: 0;
    background: #fff;
}
.condition-tools {
    display: flex;
    align-items: center;
    gap: 10px;
    height: 25px;
    padding-left: 7px;
    border-bottom: 1px solid #d5d5d8;
}

/* numbered callouts */
.mark {
    position: absolute;
    width: 26px;
    height: 26px;
    border-radius: 50%;
    background: #fd3538;
    color: #fff;
    font-family: "Noto Sans", sans-serif;
    font-size: 15px;
    line-height: 25px;
    text-align: center;
}
.mark-box {
    position: absolute;
    border: 3px solid #fd3538;
}
.mark-1 {
    top: 28px;
    left: 13px;
}
.box-1 {
    top: 47px;
    left: 24px;
    width: 32px;
    height: 29px;
}
.mark-2 {
    top: 88px;
    left: 5px;
}
.box-2 {
    top: 104px;
    left: 19px;
    width: 113px;
    height: 25px;
}
.mark-3 {
    top: 3px;
    left: 23px;
}
.box-3 {
    top: 19px;
    left: 35px;
    bottom: 2px;
    width: 995px;
}
```
